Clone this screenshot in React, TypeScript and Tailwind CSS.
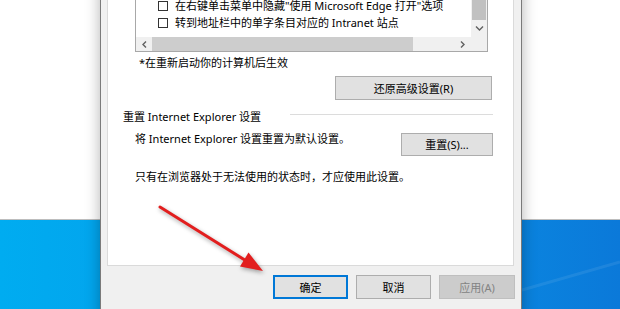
import React from "react";

const Chevron = ({ dir }: { dir: "l" | "r" | "d" }) => {
  const pts = dir === "l" ? "5,1.5 2,4.5 5,7.5" : dir === "r" ? "2,1.5 5,4.5 2,7.5" : "1,2.5 4.5,6 8,2.5";
  return (
    <svg width={dir === "d" ? 9 : 7} height={9} viewBox={dir === "d" ? "0 0 9 9" : "0 0 7 9"}>
      <polyline points={pts} fill="none" stroke="#606060" strokeWidth="1.4" />
    </svg>
  );
};

const Btn = ({ children, className = "" }: { children: React.ReactNode; className?: string }) => (
  <div className={`flex items-center justify-center border bg-[#e1e1e1] text-black ${className}`}>{children}</div>
);

export default function App() {
  return (
    <div className="relative w-[620px] h-[309px] overflow-hidden font-['Segoe_UI','Noto_Sans','Noto_Sans_CJK_SC',sans-serif] text-[11px] leading-[15px] text-black">
      {/* desktop background */}
      <div className="flex flex-col w-full h-full">
        <div className="h-[220px] bg-white border-b border-[#bdbdbd] shadow-[0_1px_2px_rgba(0,0,0,0.15)]" />
        <div className="flex-1 bg-[linear-gradient(to_right,#00acf0_0%,#02a6ee_15%,#0a86e0_80%,#0b79d9_100%)] relative">
          <svg className="absolute inset-0" width="620" height="89">
            <line x1="522" y1="70" x2="620" y2="42" stroke="rgba(255,255,255,0.08)" strokeWidth="3" />
          </svg>
        </div>
      </div>

      {/* dialog */}
      <div className="absolute left-[100px] top-[-40px] w-[422px] h-[360px] bg-[#f0f0f0] border border-[#7a7a7a] shadow-[0_0_14px_rgba(0,0,0,0.3)] pl-[6px] pr-[7px] flex flex-col">
        <div className="h-[305px] bg-white border border-[#dadada] flex flex-col">
          {/* listbox */}
          <div className="ml-[27px] mt-[18px] w-[353px] h-[72px] border border-[#a8a8a8] flex flex-col">
            <div className="flex h-[56px]">
              <div className="flex-1 flex flex-col justify-end pb-[6px] overflow-hidden whitespace-nowrap">
                <div className="h-[17px] flex items-center pl-[22px] gap-[7px]">
                  <div className="w-[10px] h-[10px] border border-[#333] bg-white shrink-0" />
                  <span>在右键单击菜单中隐藏"使用 Microsoft Edge 打开"选项</span>
                </div>
                <div className="h-[17px] flex items-center pl-[22px] gap-[7px]">
                  <div className="w-[10px] h-[10px] border border-[#333] bg-white shrink-0" />
                  <span>转到地址栏中的单字条目对应的 Intranet 站点</span>
                </div>
              </div>
              <div className="w-[16px] bg-[#f0f0f0] flex flex-col">
                <div className="h-[39px] mx-[1px] bg-[#c1c1c1]" />
                <div className="flex-1 flex items-center justify-center">
                  <Chevron dir="d" />
                </div>
              </div>
            </div>
            <div className="h-[14px] flex bg-[#f0f0f0]">
              <div className="w-[16px] flex items-center justify-center">
                <Chevron dir="l" />
              </div>
              <div className="w-[261px] bg-[#cdcdcd]" />
              <div className="flex-1 flex items-center justify-end pr-[5px]">
                <Chevron dir="r" />
              </div>
              <div className="w-[16px] bg-[#f0f0f0]" />
            </div>
          </div>

          <div className="ml-[31px] mt-[3px]">*在重新启动你的计算机后生效</div>

          <Btn className="ml-[227px] mt-[6px] w-[157px] h-[24px] border-[#adadad]">还原高级设置(R)</Btn>

          <div className="flex mt-[9px] pr-[20px]">
            <span className="ml-[15px]">重置 Internet Explorer 设置</span>
            <div className="ml-auto mt-[5px] w-[203px] h-px bg-[#dcdcdc]" />
          </div>

          <div className="flex mt-[7px] pr-[20px]">
            <span className="ml-[27px]">将 Internet Explorer 设置重置为默认设置。</span>
            <Btn className="ml-auto mt-[2px] w-[92px] h-[23px] border-[#adadad]">重置(S)...</Btn>
          </div>

          <div className="ml-[27px] mt-[13px]">只有在浏览器处于无法使用的状态时，才应使用此设置。</div>
        </div>

        <div className="flex justify-end gap-[8px] mt-[9px] mr-[-1px]">
          <Btn className="w-[75px] h-[24px] border-2 border-[#0078d7]">确定</Btn>
          <Btn className="w-[75px] h-[24px] border-[#adadad]">取消</Btn>
          <div className="w-[76px] h-[24px] flex items-center justify-center border border-[#bfbfbf] bg-[#cccccc] text-[#838383]">应用(A)</div>
        </div>
      </div>

      {/* red arrow */}
      <svg className="absolute left-0 top-0 drop-shadow-[1px_2px_2px_rgba(0,0,0,0.35)]" width="620" height="309">
        <line x1="160" y1="207" x2="248" y2="262" stroke="#e21e1e" strokeWidth="3" strokeLinecap="round" />
        <polygon points="263,271 240,266.5 248.5,252.5" fill="#e21e1e" />
      </svg>
    </div>
  );
}
